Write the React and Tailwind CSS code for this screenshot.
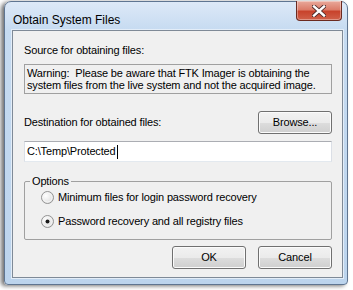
import { useState } from 'react';

const font = { fontFamily: '"Liberation Sans", Arial, sans-serif' };

function Radio({ checked }) {
    return (
        <svg width="13" height="13" viewBox="0 0 13 13" className="shrink-0">
            <defs>
                <radialGradient id={checked ? 'rg1' : 'rg0'} cx="0.35" cy="0.35" r="0.8">
                    <stop offset="0" stopColor="#ffffff" />
                    <stop offset="1" stopColor="#d8d8d8" />
                </radialGradient>
            </defs>
            <circle cx="6.5" cy="6.5" r="6" fill={`url(#${checked ? 'rg1' : 'rg0'})`} stroke="#939393" />
            <circle cx="6.5" cy="6.5" r="4.5" fill="none" stroke="#f6f6f6" />
            {checked && <circle cx="6.5" cy="6.5" r="2" fill="#1a1a1a" />}
        </svg>
    );
}

function Button({ children, className = '' }) {
    return (
        <button
            className={
                'h-[23px] w-[74px] rounded-[3px] border border-[#707070] text-[11px] text-black ' +
                'bg-[linear-gradient(to_bottom,#f2f2f2_0%,#ebebeb_50%,#dddddd_51%,#cfcfcf_100%)] ' +
                'shadow-[inset_0_0_0_1px_#fbfbfb] ' + className
            }
        >
            {children}
        </button>
    );
}

function CloseButton() {
    return (
        <div className="h-[20px] w-[46px] -mt-[1px] mr-[5px] rounded-b-[4px] border border-t-0 border-[#6b2a20] bg-[linear-gradient(to_bottom,#e9a99b_0%,#dc7d6a_45%,#c8432c_55%,#d0614a_100%)] shadow-[inset_0_0_0_1px_rgba(255,255,255,0.35)] flex items-center justify-center">
            <svg width="14" height="12" viewBox="0 0 14 12">
                <path d="M2 1.5 L12 10.5 M12 1.5 L2 10.5" stroke="#4a2a2a" strokeWidth="4.2" strokeLinecap="square" />
                <path d="M2 1.5 L12 10.5 M12 1.5 L2 10.5" stroke="#ffffff" strokeWidth="2.4" strokeLinecap="square" />
            </svg>
        </div>
    );
}

export default function App() {
    const [path, setPath] = useState('C:\\Temp\\Protected');
    const [mode, setMode] = useState('all');

    return (
        <div className="w-[353px] h-[290px] bg-white overflow-hidden pt-[1px]" style={font}>
            <div className="ml-[4px] w-[344px] h-[284px] rounded-t-[7px] rounded-b-[4px] border border-[#5f7591] bg-[linear-gradient(to_bottom,#dde9f7_0px,#c6dbf1_28px,#bcd4ed_100%)] shadow-[-3px_1px_4px_rgba(0,0,0,0.55)] flex flex-col">
                {/* title bar */}
                <div className="h-[28px] flex items-start justify-between shrink-0">
                    <span className="pl-[8px] pt-[11px] text-[12px] leading-[14px] text-black">Obtain System Files</span>
                    <CloseButton />
                </div>

                {/* client area */}
                <div className="ml-[7px] w-[331px] h-[248px] border border-[#7f8a97] bg-[#f0f0f0] shadow-[0_0_0_1px_#e3edf8] pl-[11px] pr-[10px] pt-[13px] flex flex-col text-[11px] leading-[13px] tracking-[-0.15px] text-black">
                    <div>Source for obtaining files:</div>

                    <div className="mt-[7px] h-[30px] border border-[#a0a0a0] pl-[2px] pt-[2px] leading-[12px]">
                        Warning:&nbsp; Please be aware that FTK Imager is obtaining the<br />
                        system files from the live system and not the acquired image.
                    </div>

                    <div className="mt-[17px] flex items-center justify-between">
                        <span>Destination for obtained files:</span>
                        <Button>Browse...</Button>
                    </div>

                    <div className="mt-[7px] h-[21px] border border-[#abadb3] border-l-[#dbdfe6] border-r-[#dbdfe6] border-b-[#e3e9ef] bg-white flex items-center pl-[2px]">
                        <span>{path}</span>
                        <span className="ml-[1px] w-[1px] h-[14px] bg-black" />
                    </div>

                    <fieldset className="mt-[13px] h-[65px] border border-[#a0a0a0] rounded-[2px] pl-[16px] pr-[15px] pt-[3px]">
                        <legend className="ml-[-11px] px-[2px]">Options</legend>
                        <label className="flex items-center gap-[4px]" onClick={() => setMode('min')}>
                            <Radio checked={mode === 'min'} />
                            <span>Minimum files for login password recovery</span>
                        </label>
                        <label className="mt-[11px] flex items-center gap-[4px]" onClick={() => setMode('all')}>
                            <Radio checked={mode === 'all'} />
                            <span>Password recovery and all registry files</span>
                        </label>
                    </fieldset>

                    <div className="mt-[6px] flex justify-end gap-[12px]">
                        <Button>OK</Button>
                        <Button>Cancel</Button>
                    </div>
                </div>
            </div>
        </div>
    );
}
